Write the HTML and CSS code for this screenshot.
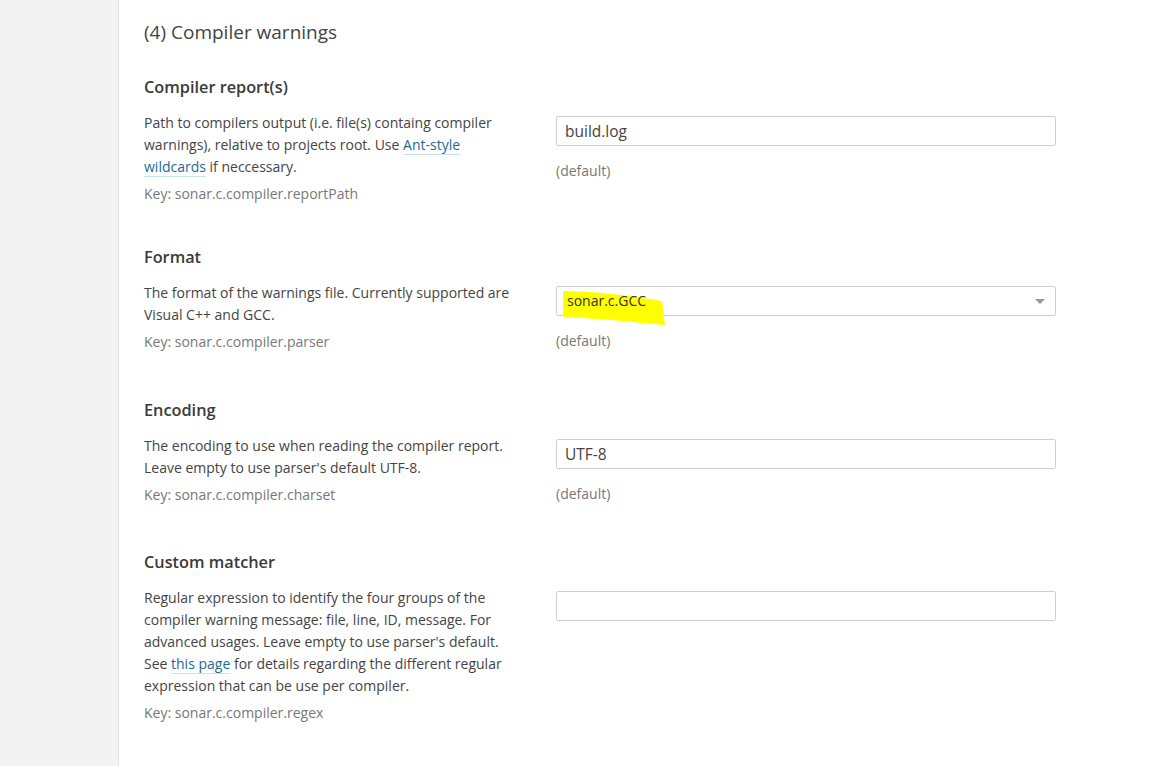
FILE: index.html
```html
<!DOCTYPE html>
<html lang="en">
<head>
<meta charset="utf-8">
<title>Compiler warnings</title>
<link rel="stylesheet" href="styles.css">
</head>
<body>
<div class="page">
  <aside class="sidebar"></aside>
  <main class="main">
    <h2 class="section-title">(4) Compiler warnings</h2>

    <div class="setting">
      <div class="setting-left">
        <h3 class="setting-name">Compiler report(s)</h3>
        <div class="setting-desc">Path to compilers output (i.e. file(s) containg compiler warnings), relative to projects root. Use <a href="#" class="link">Ant-style wildcards</a> if neccessary.</div>
        <div class="setting-key">Key: sonar.c.compiler.reportPath</div>
      </div>
      <div class="setting-right">
        <div class="field">build.log</div>
        <div class="setting-default">(default)</div>
      </div>
    </div>

    <div class="setting">
      <div class="setting-left">
        <h3 class="setting-name">Format</h3>
        <div class="setting-desc">The format of the warnings file. Currently supported are Visual C++ and GCC.</div>
        <div class="setting-key">Key: sonar.c.compiler.parser</div>
      </div>
      <div class="setting-right">
        <div class="field select">
          <span class="select-value">sonar.c.GCC</span>
          <span class="select-arrow"></span>
          <svg class="marker" width="106" height="38" viewBox="0 0 106 38"><polygon points="1,1 30,2 60,5 88,9 100,11 103,35 80,33 50,30 20,28 1,27" fill="#ffff00"/></svg>
        </div>
        <div class="setting-default">(default)</div>
      </div>
    </div>

    <div class="setting">
      <div class="setting-left">
        <h3 class="setting-name">Encoding</h3>
        <div class="setting-desc">The encoding to use when reading the compiler report. Leave empty to use parser's default UTF-8.</div>
        <div class="setting-key">Key: sonar.c.compiler.charset</div>
      </div>
      <div class="setting-right">
        <div class="field">UTF-8</div>
        <div class="setting-default">(default)</div>
      </div>
    </div>

    <div class="setting">
      <div class="setting-left">
        <h3 class="setting-name">Custom matcher</h3>
        <div class="setting-desc">Regular expression to identify the four groups of the compiler warning message: file, line, ID, message. For advanced usages. Leave empty to use parser's default. See <a href="#" class="link">this page</a> for details regarding the different regular expression that can be use per compiler.</div>
        <div class="setting-key">Key: sonar.c.compiler.regex</div>
      </div>
      <div class="setting-right">
        <div class="field"></div>
      </div>
    </div>
  </main>
</div>
</body>
</html>
```

FILE: styles.css
```css
html, body {
  margin: 0;
  padding: 0;
  background: #ffffff;
}

body {
  font-family: "Open Sans", "Noto Sans", sans-serif;
  color: #444444;
  font-size: 14px;
}

.page {
  display: flex;
  min-height: 766px;
}

.sidebar {
  width: 118px;
  flex: 0 0 118px;
  background: #f3f3f3;
  border-right: 1px solid #e2e2e2;
}

.main {
  flex: 1;
  padding: 20px 0 0 25px;
}

.section-title {
  margin: 0;
  font-size: 19px;
  line-height: 24px;
  font-weight: 400;
  color: #444444;
}

.setting {
  display: flex;
  padding-bottom: 45px;
}

.setting:first-of-type {
  margin-top: 31px;
  padding-bottom: 40px;
}

.setting:last-of-type {
  margin-top: -1px;
}

.setting-left {
  width: 372px;
  padding-right: 40px;
}

.setting-name {
  margin: 0 0 13px;
  font-size: 16.3px;
  line-height: 24px;
  font-weight: 600;
  color: #3a3a3a;
}

.setting-desc {
  line-height: 22px;
}

.link {
  color: #236a97;
  text-decoration: underline;
  text-decoration-color: #cae3f2;
  text-decoration-thickness: 1px;
  text-underline-offset: 4px;
}

.setting-key {
  margin-top: 5px;
  line-height: 22px;
  color: #777777;
}

.setting-right {
  padding-top: 41px;
}

.field {
  position: relative;
  box-sizing: border-box;
  width: 500px;
  height: 30px;
  border: 1px solid #cfcfcf;
  border-radius: 2px;
  padding: 0 8px;
  font-size: 15.5px;
  line-height: 28px;
  color: #444444;
}

.select {
  font-size: 14px;
}

.select-value {
  position: relative;
  z-index: 2;
  padding-left: 2px;
  color: #333333;
}

.select-arrow {
  position: absolute;
  right: 10px;
  top: 12px;
  width: 0;
  height: 0;
  border-left: 5px solid transparent;
  border-right: 5px solid transparent;
  border-top: 5px solid #999999;
}

.marker {
  position: absolute;
  left: 5px;
  top: 3px;
  z-index: 1;
}

.setting-default {
  margin-top: 14px;
  line-height: 22px;
  color: #777777;
}
```
